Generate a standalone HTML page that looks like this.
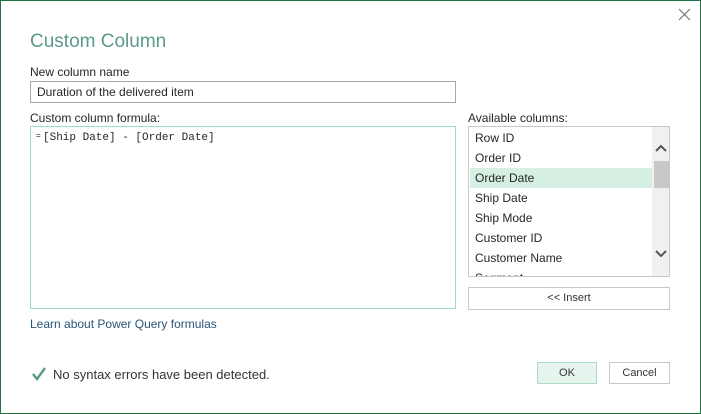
<!DOCTYPE html>
<html><head><style>
*{margin:0;padding:0;box-sizing:border-box}
body{width:701px;height:414px;overflow:hidden;background:#fff;font-family:"Liberation Sans",sans-serif;font-size:12px;color:#262626;position:relative}
.frame{position:absolute;left:0;top:0;width:701px;height:414px;border:1px solid #217346}
.a{position:absolute;white-space:nowrap}
.btn{position:absolute;border:1px solid #c8c8c8;background:#fff;text-align:center;font-size:11px;color:#333}
.item{position:absolute;left:1px;width:183px;height:20px;line-height:20px;padding-left:5px;font-size:12px}
</style></head><body>
<div class="frame"></div>
<svg class="a" style="left:678px;top:8px" width="13" height="13"><path d="M1 1L12 12M12 1L1 12" stroke="#777" stroke-width="1.2"/></svg>
<div class="a" style="left:30px;top:31px;font-size:19px;color:#5a9a8c;">Custom Column</div>
<div class="a" style="left:30px;top:65px;">New column name</div>
<div class="a" style="left:30px;top:81px;width:426px;height:22px;border:1px solid #a8a8a8;padding:3px 0 0 6px;">Duration of the delivered item</div>
<div class="a" style="left:30px;top:111px;">Custom column formula:</div>
<div class="a" style="left:30px;top:126px;width:426px;height:183px;border:1px solid #a0dcc4;"></div>
<div class="a" style="left:36px;top:131px;font-size:8px;">=</div>
<div class="a" style="left:43px;top:132px;font-family:'Liberation Mono',monospace;font-size:11px;">[Ship Date] - [Order Date]</div>
<div class="a" style="left:468px;top:111px;">Available columns:</div>
<div class="a" style="left:468px;top:126px;width:202px;height:151px;border:1px solid #c8c8c8;overflow:hidden;">
<div class="item" style="top:1px">Row ID</div>
<div class="item" style="top:21px">Order ID</div>
<div class="item" style="top:41px;background:#d5efe3">Order Date</div>
<div class="item" style="top:61px">Ship Date</div>
<div class="item" style="top:81px">Ship Mode</div>
<div class="item" style="top:101px">Customer ID</div>
<div class="item" style="top:121px">Customer Name</div>
<div class="item" style="top:141px">Segment</div>
<div style="position:absolute;left:183px;top:0;width:17px;height:149px;background:#f0f0f0"></div>
<div style="position:absolute;left:185px;top:34px;width:15px;height:27px;background:#c8c8c8"></div>
<svg style="position:absolute;left:185px;top:16px" width="14" height="10"><path d="M2 8L7 3L12 8" stroke="#555" stroke-width="2" fill="none"/></svg>
<svg style="position:absolute;left:185px;top:122px" width="14" height="10"><path d="M2 2L7 7L12 2" stroke="#555" stroke-width="2" fill="none"/></svg>
</div>
<div class="btn" style="left:468px;top:287px;width:202px;height:23px;line-height:21px;">&lt;&lt; Insert</div>
<div class="a" style="left:30px;top:317px;color:#2b5478;">Learn about Power Query formulas</div>
<svg class="a" style="left:31px;top:366px" width="16" height="16"><path d="M2 8L6 13L14 2" stroke="#5a9a80" stroke-width="2.4" fill="none"/></svg>
<div class="a" style="left:53px;top:367px;font-size:13px;color:#333;">No syntax errors have been detected.</div>
<div class="btn" style="left:537px;top:362px;width:60px;height:22px;line-height:20px;background:#e6f4ee;border-color:#a8dcc6;">OK</div>
<div class="btn" style="left:609px;top:362px;width:61px;height:22px;line-height:20px;">Cancel</div>
</body></html>
